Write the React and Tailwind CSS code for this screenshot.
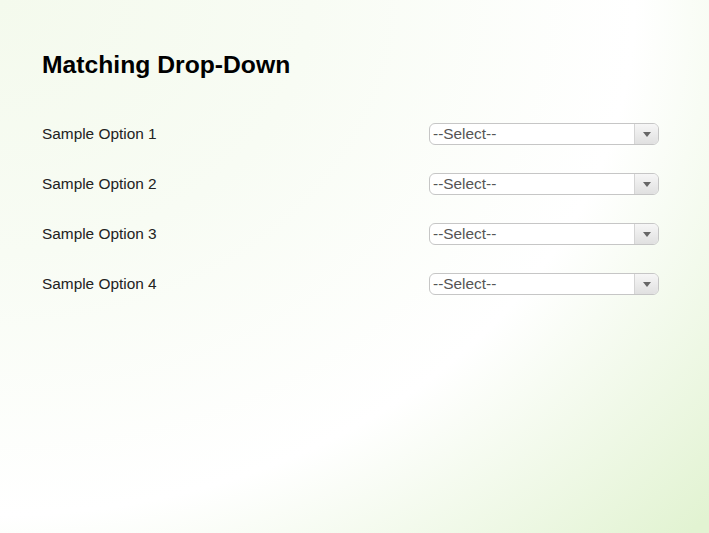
import React from 'react';

const options = ['Sample Option 1', 'Sample Option 2', 'Sample Option 3', 'Sample Option 4'];

function FakeSelect() {
    return (
        <div className="flex h-[22px] w-[230px] items-stretch rounded-[6px] border border-[#c6c6c6] bg-white">
            <span className="flex flex-1 items-center pl-[3px] text-[15.4px] leading-none text-[#555]">--Select--</span>
            <span className="flex w-[24px] items-center justify-center rounded-r-[5px] border-l border-[#d4d4d4] bg-[linear-gradient(#f6f6f6,#e0e0e0)]">
                <svg width="8" height="5" viewBox="0 0 8 5">
                    <path d="M0 0h8L4 5z" fill="#666" />
                </svg>
            </span>
        </div>
    );
}

export default function App() {
    return (
        <div className="h-[533px] w-full bg-[radial-gradient(690px_560px_at_0_0,#f4faed_0%,#f8fcf4_45%,#ffffff_92%,#e2f3d2_138%)] font-['Liberation_Sans',Arial,sans-serif]">
            <div className="px-[42px] pt-[51px]">
                <h1 className="text-[24.7px] font-bold leading-[28px] text-black">Matching Drop-Down</h1>
                <div className="mt-[44px] flex w-[617px] flex-col gap-[28px]">
                    {options.map((label) => (
                        <div key={label} className="flex h-[22px] items-center justify-between">
                            <span className="text-[15.4px] leading-[22px] text-[#222]">{label}</span>
                            <FakeSelect />
                        </div>
                    ))}
                </div>
            </div>
        </div>
    );
}
